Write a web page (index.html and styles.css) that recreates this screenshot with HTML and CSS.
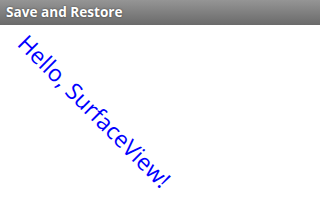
FILE: index.html
```html
<!DOCTYPE html>
<html>
<head>
<meta charset="utf-8">
<link rel="stylesheet" href="styles.css">
</head>
<body>
<div class="title">Save and Restore</div>
<div class="surface">
  <div class="hello">Hello, SurfaceView!</div>
</div>
</body>
</html>
```
FILE: styles.css
```css
html, body {
  margin: 0;
  padding: 0;
  background: #ffffff;
  width: 320px;
  height: 211px;
  overflow: hidden;
}
.title {
  height: 25px;
  box-sizing: border-box;
  padding-left: 6px;
  background: linear-gradient(#959595, #6a6a6a);
  color: #ffffff;
  font-family: "Open Sans", "DejaVu Sans", sans-serif;
  font-weight: bold;
  font-size: 13.6px;
  line-height: 24px;
  text-shadow: 0 0 2px rgba(0,0,0,0.6);
  white-space: nowrap;
}
.surface {
  position: relative;
  height: 186px;
  background: #ffffff;
}
.hello {
  position: absolute;
  left: 16px;
  top: 0px;
  font-family: "Open Sans", "DejaVu Sans", sans-serif;
  font-size: 23px;
  line-height: 23px;
  color: #0000ff;
  white-space: nowrap;
  transform-origin: 0 20.4px;
  transform: rotate(45deg);
}
```
